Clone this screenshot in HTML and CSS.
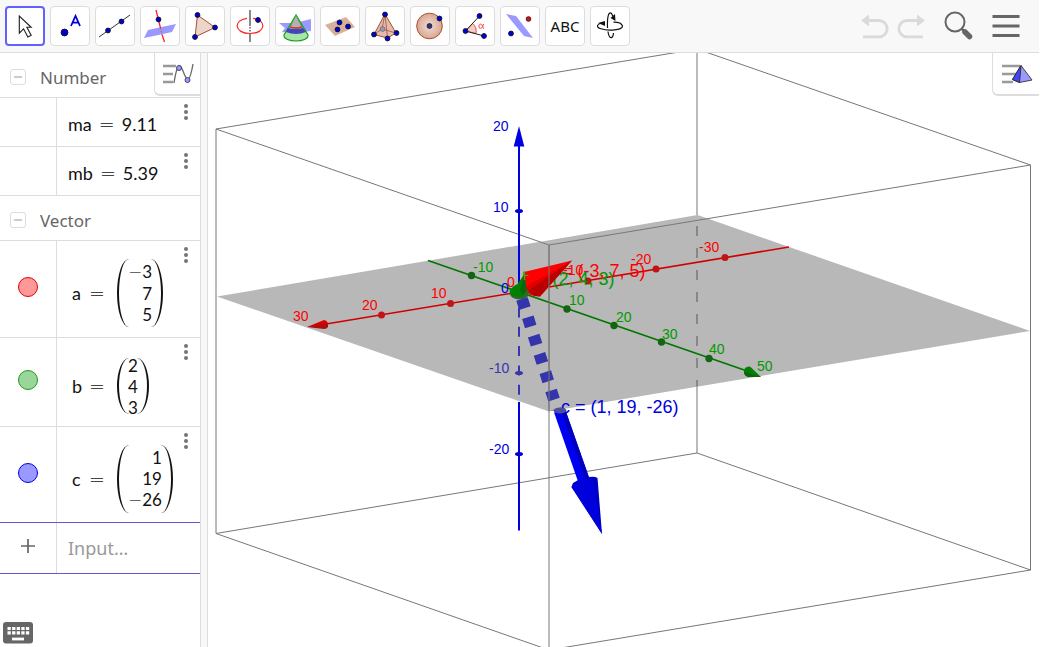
FILE: index.html
```html
<!DOCTYPE html>
<html lang="en">
<head>
<meta charset="utf-8">
<title>3D Calculator</title>
<link rel="stylesheet" href="styles.css">
</head>
<body>
<div class="app">
  <header class="toolbar">
    <div class="tools" role="toolbar" aria-label="Tools">
      <button class="tool selected" aria-label="Move"><svg viewBox="0 0 38 38"><path d="M13 8.500v18l4.500-4.500 4.500 8.500 3.500-1.700-4.500-8.500h4.500z" fill="#fff" stroke="#222" stroke-width="1.200"/></svg></button>
      <button class="tool" aria-label="Point"><svg viewBox="0 0 38 38"><g fill="none" stroke="#00d" stroke-width="1.800"><path d="M20 19 24.500 9 29 19M21.500 15.600h6"/></g><circle cx="13.500" cy="25.500" r="3.400" class="pt"/></svg></button>
      <button class="tool" aria-label="Line"><svg viewBox="0 0 38 38"><path d="M3 30 34 8" stroke="#333"/><circle cx="12" cy="23.500" r="2.400" class="pt"/><circle cx="25.500" cy="14.500" r="2.400" class="pt"/></svg></button>
      <button class="tool" aria-label="Perpendicular line"><svg viewBox="0 0 38 38"><path d="M3 31 7 23Q20 20 35 17L31 25Q18 28 3 31z" fill="#99f"/><path d="M15 3l4.500 18M21 27.500l2.500 7.500" stroke="#f22" stroke-width="1.300"/><path d="M19.500 21l1.500 6.500" stroke="#b55" stroke-dasharray="1.500 1.500"/><circle cx="17.500" cy="12.500" r="2.400" class="pt"/></svg></button>
      <button class="tool" aria-label="Polygon"><svg viewBox="0 0 38 38"><path d="M11.500 8 29 20.500 9 30z" fill="#ecd5cb" stroke="#a5502f"/><circle cx="11.500" cy="8" r="2.400" class="pt"/><circle cx="29" cy="20.500" r="2.400" class="pt"/><circle cx="9" cy="30" r="2.400" class="pt"/></svg></button>
      <button class="tool" aria-label="Circle with axis through point"><svg viewBox="0 0 38 38"><path d="M22 11.300C36 13 35 26.500 19 26.500S2 13 16 11.300" fill="none" stroke="#f22" stroke-width="1.200"/><path d="M19 3v16M19 27v8" stroke="#888" stroke-width="2"/><path d="M19 20v6" stroke="#888" stroke-width="2" stroke-dasharray="1.500 1.500"/><circle cx="27" cy="13" r="2.400" class="pt"/></svg></button>
      <button class="tool" aria-label="Intersect two surfaces"><svg viewBox="0 0 38 38"><path d="M3 16h16l16-4v12l-16 2-13-1 3-4z" fill="#99f"/><path d="M20 8 8 28c-1 8 25 8 24 0z" fill="#8d8" fill-opacity=".75" stroke="#292" stroke-width="1.200"/><path d="M12 21 10 25q10 4 20 0l-3-4q-8 2-15 0z" fill="#44b"/><path d="M20 8l-6 12q6 2 12 0z" fill="#b9aeb5" stroke="#3a3"/><path d="M14 20q6 2 12 0" stroke="#d33" fill="none" stroke-width="1.500"/></svg></button>
      <button class="tool" aria-label="Plane through 3 points"><svg viewBox="0 0 38 38"><path d="M4 18 25 10l9 10-20 9z" fill="#d9af9e"/><circle cx="18.500" cy="15.500" r="2.400" class="pt"/><circle cx="16.500" cy="22.500" r="2.400" class="pt"/><circle cx="27" cy="19.500" r="2.400" class="pt"/></svg></button>
      <button class="tool" aria-label="Pyramid"><svg viewBox="0 0 38 38"><path d="M19 7 8 27.500 21.500 31 30 26z" fill="#e2bcae" stroke="#a5502f"/><path d="M19 7 21.500 31M8 27.500l8-5.500 14 4M19 7l-3 15" fill="none" stroke="#a5502f" stroke-width=".8"/><circle cx="16.500" cy="22" r="2.400" fill="#99a" stroke="#778"/><circle cx="19" cy="7.500" r="2.400" class="pt"/><circle cx="8" cy="27.500" r="2.400" class="pt"/><circle cx="21.500" cy="31.500" r="2.400" class="pt"/><circle cx="30.500" cy="26" r="2.400" class="pt"/></svg></button>
      <button class="tool" aria-label="Sphere"><svg viewBox="0 0 38 38"><defs><radialGradient id="ball"><stop offset="0" stop-color="#f0dcd3"/><stop offset="1" stop-color="#d9a793"/></radialGradient></defs><circle cx="18.500" cy="19" r="12.800" fill="url(#ball)" stroke="#a5502f"/><circle cx="18.500" cy="19" r="2.400" fill="#337" stroke="#224"/><circle cx="28.500" cy="11.500" r="2.400" class="pt"/></svg></button>
      <button class="tool" aria-label="Angle"><svg viewBox="0 0 38 38"><path d="M9.500 24 16.500 16.500q4.500 3 3.500 10z" fill="#ecd0c8" stroke="#f44"/><path d="M23.500 9 9.500 24 28 29" fill="none" stroke="#222"/><path d="M27.500 17c-1.500 5.500-4.500 5.500-4.500 2.500s3-4 4.500 2.300" fill="none" stroke="#f33"/><circle cx="9.500" cy="24" r="2.400" class="pt"/><circle cx="23.500" cy="9" r="2.400" class="pt"/><circle cx="28" cy="29" r="2.400" class="pt"/></svg></button>
      <button class="tool" aria-label="Reflect about plane"><svg viewBox="0 0 38 38"><path d="M5 7l10 2 17 22-9-2z" fill="#99f"/><circle cx="27.500" cy="12" r="2.300" fill="#d11" stroke="#511"/><circle cx="10" cy="26.500" r="2.400" class="pt"/></svg></button>
      <button class="tool text-tool" aria-label="Text">ABC</button>
      <button class="tool" aria-label="Rotate 3D graphics view"><svg viewBox="0 0 38 38"><path d="M12.500 15.500C5 17 5 20 10 21.800c7 2.500 22 1.500 21.500-2.800-.8-3-6-3.800-9-3.800M17 24.500c1 8 5 8 5.500 1.500M16.500 21C16 8 18 4.500 20.500 6.500l1.500 3" fill="none" stroke="#111" stroke-width="1.200"/><path d="M19.500 11l5 3-.5-7zM7 16l7-2v5z" fill="#111"/></svg></button>
    </div>
    <div class="actions">
      <button class="icon" aria-label="Undo" disabled><svg width="30" height="26" viewBox="0 0 30 26"><path d="M8 7.500h11a8.200 8.200 0 0 1 0 16.400H3" fill="none" stroke="#dadada" stroke-width="2.800"/><path d="M1 7.500l8-6v12z" fill="#dadada"/></svg></button>
      <button class="icon" aria-label="Redo" disabled><svg width="30" height="26" viewBox="0 0 30 26"><path d="M22 7.500H11a8.200 8.200 0 0 0 0 16.400h16" fill="none" stroke="#dadada" stroke-width="2.800"/><path d="M29 7.500l-8-6v12z" fill="#dadada"/></svg></button>
      <button class="icon search" aria-label="Search"><svg width="30" height="30" viewBox="0 0 30 30"><circle cx="11" cy="11" r="9.500" fill="none" stroke="#666" stroke-width="2"/><path d="M17.500 17.500l3 3" stroke="#666" stroke-width="2.500"/><path d="M21 21l4.500 4.500" stroke="#666" stroke-width="5.500" stroke-linecap="round"/></svg></button>
      <button class="icon menu" aria-label="Menu"><svg width="28" height="24" viewBox="0 0 28 24"><path d="M.5 2.500h27M.5 12h27M.5 21.500h27" stroke="#666" stroke-width="3"/></svg></button>
    </div>
  </header>
  <main class="workspace">
    <section class="algebra" aria-label="Algebra">
      <button class="view-tab" aria-label="Algebra style"><svg width="34" height="22" viewBox="0 0 34 22"><path d="M1 3h13M1 11h10M1 19h10" stroke="#999" stroke-width="2.500"/><path d="M12 20C15 0 18 0 21 8s6 16 10-7" fill="none" stroke="#666" stroke-width="1.300"/><circle cx="17" cy="5" r="2.500" fill="#99f" stroke="#446"/><circle cx="25.500" cy="17" r="2.500" fill="#99f" stroke="#446"/></svg></button>
      <h2 class="group"><button class="collapse" aria-label="Collapse Number"></button>Number</h2>
      <div class="row"><span class="cell"></span><div class="eq number"><span>ma</span><span class="op">=</span><span>9.11</span></div><button class="more" aria-label="More"><i></i><i></i><i></i></button></div>
      <div class="row"><span class="cell"></span><div class="eq number"><span>mb</span><span class="op">=</span><span>5.39</span></div><button class="more" aria-label="More"><i></i><i></i><i></i></button></div>
      <h2 class="group"><button class="collapse" aria-label="Collapse Vector"></button>Vector</h2>
      <div class="row tall"><span class="cell"><button class="marble red" aria-label="Toggle a"></button></span><div class="eq vector"><span class="name">a</span><span class="op">=</span><span class="matrix"><span><b>−</b>3</span><span>7</span><span>5</span></span></div><button class="more" aria-label="More"><i></i><i></i><i></i></button></div>
      <div class="row medium"><span class="cell"><button class="marble green" aria-label="Toggle b"></button></span><div class="eq vector"><span class="name">b</span><span class="op">=</span><span class="matrix short"><span>2</span><span>4</span><span>3</span></span></div><button class="more" aria-label="More"><i></i><i></i><i></i></button></div>
      <div class="row tall last"><span class="cell"><button class="marble blue" aria-label="Toggle c"></button></span><div class="eq vector"><span class="name">c</span><span class="op">=</span><span class="matrix"><span>1</span><span>19</span><span><b>−</b>26</span></span></div><button class="more" aria-label="More"><i></i><i></i><i></i></button></div>
      <div class="row entry"><span class="cell"><button class="icon" aria-label="Add"><svg width="14" height="14" viewBox="0 0 14 14"><path d="M7 0v14M0 7h14" stroke="#666" stroke-width="1.700"/></svg></button></span><input class="entry-input" type="text" aria-label="Input" placeholder="Input…"></div>
      <button class="icon keyboard" aria-label="Open keyboard"><svg width="30" height="22" viewBox="0 0 30 22"><rect width="30" height="21.500" rx="3" fill="#666"/><path d="M4.500 6.500h22M4.500 10.800h22" stroke="#fff" stroke-width="3.200" stroke-dasharray="3.300 1.300"/><path d="M9 17h12" stroke="#fff" stroke-width="2.800"/></svg></button>
    </section>
    <div class="splitter"></div>
    <section class="graphics" aria-label="3D Graphics">
      <svg class="scene" viewBox="208 53 831 594" preserveAspectRatio="xMidYMid slice">
        <path d="M217 296.500 697.500 215 1030 331 549 411.500z" fill="#b8b8b8"/>
        <g class="box">
          <path d="M216 129 697 49 1030.500 165 549 245zM216 129v404.500L697 453l333.500 117L549 650 216 533.500M549 245v405M1030.500 165v405M697 49v166M697 386v67"/>
          <path d="M697 226v160" stroke-width="1.500" stroke-dasharray="10 12"/>
        </g>
        <g stroke="#d00000" stroke-width="1.700"><path d="M320 325 519 292M549 287 789 247"/></g>
        <g fill="#c21414"><circle cx="381.500" cy="315" r="3.500"/><circle cx="450.500" cy="303.500" r="3.500"/><circle cx="588" cy="281" r="3.500"/><circle cx="656" cy="269" r="3.500"/><circle cx="725" cy="257.500" r="3.500"/></g>
        <path d="M307 327 324 320q5 1 4 7z" fill="#d60000"/><path d="M307 327l21-3v3q-1 2-4 2z" fill="#a81010"/>
        <path d="M428 260.500 750 372" stroke="#007800" stroke-width="1.700"/>
        <g fill="#146414"><circle cx="471.500" cy="275.500" r="3.700"/><circle cx="567" cy="309" r="3.700"/><circle cx="614" cy="325.500" r="3.700"/><circle cx="661.500" cy="342" r="3.700"/><circle cx="709" cy="358.500" r="3.700"/></g>
        <path d="M761 377 750 366.500q-6 0-6 5 0 4 4 5z" fill="#008000"/><path d="M761 377 744 372q0 4 4 5z" fill="#126012"/>
        <path d="M519 144v148M519 402v128.500" stroke="#0000e0" stroke-width="2"/>
        <path d="M519 307.500v95" stroke="#3636b0" stroke-width="2" stroke-dasharray="10 9.300"/>
        <path d="M519 126l5.300 20.500h-10.600z" fill="#0000e0"/>
        <g fill="#0000c8"><ellipse cx="519" cy="211" rx="4" ry="2"/><ellipse cx="519" cy="373" rx="4" ry="2" fill="#3636a8"/><ellipse cx="519" cy="454" rx="4" ry="2"/></g>
        <g class="scale red-text"><text x="293" y="321">30</text><text x="362" y="310">20</text><text x="431" y="298">10</text><text x="507" y="287">0</text><text x="563" y="275">-10</text><text x="631" y="264">-20</text><text x="699" y="252">-30</text></g>
        <g class="scale green-text"><text x="473" y="272">-10</text><text x="569" y="305">10</text><text x="616" y="322">20</text><text x="662" y="339">30</text><text x="709" y="354">40</text><text x="757" y="371">50</text></g>
        <g class="scale blue-text"><text x="493" y="131">20</text><text x="493" y="212">10</text><text class="under" x="489" y="373">-10</text><text x="489" y="454">-20</text></g>
        <text class="label red-text" x="547" y="277">a = (-3, 7, 5)</text>
        <text class="label green-text" x="522" y="285">b = (2, 4, 3)</text>
        <path d="M572 260.500 524 272l2 18 4 5 10 1.500z" fill="#f00"/>
        <path d="M572 260.500 525 287l5 6z" fill="#e00000"/><path d="M572 260.500 528 291l6 5 6 .5z" fill="#b80000"/>
        <ellipse cx="519.500" cy="293.500" rx="9.500" ry="6" fill="#2a6b2a"/>
        <path d="M509.500 291q3-5 8-7l7-10 2 16-3 6q-8 2-13-2z" fill="#008000"/><path d="M524.500 274l2 16-3 5-4-4z" fill="#0a680a"/>
        <path d="M524.500 271v9M524.500 275.500h4" stroke="#2bb32b" stroke-width="1.200"/>
        <text class="small blue-text" x="501" y="293">0</text>
        <text class="label blue-text" x="561" y="413">c = (1, 19, -26)</text>
        <path d="M522 299 557 409" stroke="#3434ac" stroke-width="12" stroke-dasharray="9.600 9.600" />
        <path d="M559.500 410.500 584 481" stroke="#0000f0" stroke-width="11.500"/><path d="M563.500 411 587.500 479" stroke="#0000bd" stroke-width="4"/>
        <ellipse cx="560" cy="410.500" rx="6.500" ry="3" fill="#4d4d9c"/>
        <path d="M602 534 571.500 487l1.500-4 7-4 9-2q6-1 8.500 1z" fill="#0000c4"/><path d="M602 534 571.500 487l8-8 13 0z" fill="#00d"/>
        <path d="M549 245v166" class="edge"/>
      </svg>
      <button class="view-tab wide" aria-label="Graphics style"><svg width="34" height="22" viewBox="0 0 34 22"><path d="M1 3h18M1 11h14M1 19h11" stroke="#999" stroke-width="2.500"/><path d="M20 2.500 31 17 18.500 19.500 11.500 16.500z" fill="#99f" stroke="#444"/><path d="M20 2.500 18.500 19.500 11.500 16.500z" fill="#44f" stroke="#333"/></svg></button>
    </section>
  </main>
</div>
</body>
</html>
```
FILE: styles.css
```css
* { box-sizing: border-box; }
body { margin: 0; background: #fff; }
button { padding: 0; border: 0; background: none; font: inherit; color: inherit; }
svg { display: block; }

.app {
  display: flex;
  flex-direction: column;
  height: 100vh;
  padding-right: 1px;
  font-family: "Noto Sans", sans-serif;
}

.toolbar {
  display: flex;
  justify-content: space-between;
  align-items: center;
  padding: 6px 19px 6px 5px;
  background: #f8f8f8;
  border-bottom: 1px solid #ddd;
}
.tools { display: flex; gap: 5px; }
.tool {
  width: 40px;
  height: 40px;
  border: 1px solid #ddd;
  border-radius: 4px;
  background: #fff;
}
.tool svg { width: 38px; height: 38px; }
.tool.selected { border: 2px solid #6161ff; }
.tool.selected svg { width: 36px; height: 36px; }
.text-tool { font: 15px "Noto Sans", sans-serif; color: #111; }
.pt { fill: #00d; stroke: #113; stroke-width: 1px; }
.actions { display: flex; align-items: center; gap: 6px; }
.search { margin-left: 12px; }
.menu { margin-left: 12px; }

.workspace { display: flex; flex: 1; min-height: 0; }
.algebra {
  position: relative;
  display: flex;
  flex-direction: column;
  width: 201px;
  border-right: 1px solid #ddd;
}
.splitter { width: 7px; background: #f8f8f8; border-right: 1px solid #ddd; }
.graphics { position: relative; flex: 1; min-width: 0; }
.scene { width: 100%; height: 100%; }

.view-tab {
  position: absolute;
  top: 0;
  right: 0;
  display: grid;
  place-items: center;
  width: 46px;
  height: 43px;
  padding-left: 3px;
  background: #fff;
  border-left: 1px solid #ddd;
  border-bottom: 2px solid #ddd;
  border-radius: 0 0 0 6px;
}
.wide { width: 47px; }

.group {
  display: flex;
  align-items: center;
  gap: 14px;
  height: 45px;
  margin: 0;
  padding: 4px 10px 0;
  border-bottom: 1px solid #ddd;
  font-size: 17px;
  font-weight: 400;
  color: #666;
}
.collapse {
  display: grid;
  place-items: center;
  width: 16px;
  height: 16px;
  border: 1px solid #ddd;
  border-radius: 3px;
}
.collapse::before { content: ""; width: 8px; height: 2px; background: #ccc; }

.row {
  display: flex;
  height: 49px;
  border-bottom: 1px solid #ddd;
}
.row.tall { height: 97px; }
.row.medium { height: 89px; }
.row.last { height: 96px; border-color: #6557d2; }
.row.entry { height: 51px; border-color: #6557d2; }
.cell {
  display: grid;
  place-items: center;
  width: 57px;
  padding-bottom: 4px;
  border-right: 1px solid #ddd;
}
.marble { width: 20px; height: 20px; border: 1px solid; border-radius: 50%; }
.marble.red { background: #ff9999; border-color: #e00000; }
.marble.green { background: #99d699; border-color: #1c991c; }
.marble.blue { background: #9999ff; border-color: #0000e8; }

.eq {
  display: flex;
  flex: 1;
  align-items: center;
  font-family: Lato, sans-serif;
  font-size: 18px;
  color: #111;
}
.number { gap: 7px; padding: 4px 0 0 11px; }
.vector { padding: 8px 0 0 15px; }
.op, .matrix b { font-family: "DejaVu Sans", sans-serif; font-weight: 200; color: #444; }
.op { font-size: 19px; line-height: 20px; }
.name { width: 17px; line-height: 20px; }
.matrix {
  position: relative;
  display: flex;
  flex-direction: column;
  justify-content: center;
  height: 68px;
  margin-left: 12px;
  padding: 0 11px;
  font-size: 17px;
  line-height: 21px;
  text-align: right;
}
.short { height: 56px; }
.matrix::before, .matrix::after {
  content: "";
  position: absolute;
  top: 0;
  bottom: 0;
  width: 10px;
}
.matrix::before { left: 0; border-left: 2px solid #111; border-radius: 100% 0 0 100% / 50%; }
.matrix::after { right: 0; border-right: 2px solid #111; border-radius: 0 100% 100% 0 / 50%; }

.more {
  display: flex;
  flex-direction: column;
  align-items: center;
  gap: 2px;
  width: 10px;
  height: 24px;
  margin-right: 9px;
  padding-top: 6px;
}
.more i { width: 4px; height: 4px; border-radius: 50%; background: #757575; }

.entry-input {
  flex: 1;
  min-width: 0;
  padding: 0 11px;
  border: 0;
  font: 18px "Noto Sans", sans-serif;
}
.entry-input::placeholder { color: #999; opacity: 1; }
.keyboard { margin: auto auto 3px 3px; }

.box { fill: none; stroke: #777; stroke-width: 1px; }
.edge { stroke: #777; stroke-width: 1px; }
.scale, .small { font: 14px "Liberation Sans", sans-serif; }
.label { font: 18px "Liberation Sans", sans-serif; }
.red-text { fill: #f00; }
.green-text { fill: #009a00; }
.blue-text { fill: #0000e0; }
.under { fill: #3636b0; }
```
